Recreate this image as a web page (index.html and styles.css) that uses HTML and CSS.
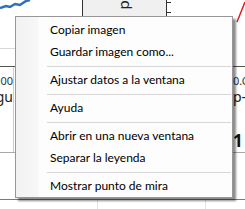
FILE: index.html
```html
<!DOCTYPE html>
<html lang="es">
<head>
    <meta charset="UTF-8">
    <title>Menú contextual</title>
    <link rel="stylesheet" href="styles.css">
</head>
<body>

<div class="app">
    <!-- Graficos -->
    <div class="charts">
        <div class="plot plot-left">
            <svg width="82" height="66" viewBox="0 0 82 66">
                <path d="M0 8 L6 6 L10 7 L15 4 L20 5 L26 1 L30 0" stroke="#2f6fb8" stroke-width="2.5" fill="none"/>
                <line x1="0" y1="48.5" x2="82" y2="48.5" stroke="#d8d8d8"/>
            </svg>
        </div>
        <div class="ylabel"><span>Latitud</span></div>
        <div class="plot plot-right">
            <svg width="78" height="66" viewBox="0 0 78 66">
                <path d="M0 2.5 H4 M0 12.5 H4 M0 22.5 H4 M0 32.5 H4 M0 42.5 H4" stroke="#333" stroke-width="1"/>
                <path d="M70 22 L78 2" stroke="#e02020" stroke-width="1.5" fill="none"/>
            </svg>
        </div>
    </div>

    <!-- Tabla -->
    <div class="table">
        <div class="cell cell-left">
            <div class="small">1.000</div>
            <div class="big">Pingu</div>
        </div>
        <div class="cell cell-mid"></div>
        <div class="cell cell-right">
            <div class="small">0.C</div>
            <div class="big">p-</div>
            <div class="num">1</div>
        </div>
    </div>

    <div class="footer">
        <div class="grid-line g1"></div>
        <div class="grid-line g2"></div>
    </div>

    <!-- Menu contextual -->
    <ul class="menu">
        <li>Copiar imagen</li>
        <li>Guardar imagen como...</li>
        <li class="sep"></li>
        <li>Ajustar datos a la ventana</li>
        <li class="sep"></li>
        <li>Ayuda</li>
        <li class="sep"></li>
        <li>Abrir en una nueva ventana</li>
        <li>Separar la leyenda</li>
        <li class="sep"></li>
        <li>Mostrar punto de mira</li>
    </ul>
</div>

</body>
</html>
```

FILE: styles.css
```css
body {
    margin: 0;
    font-family: "Noto Sans", Arial, sans-serif;
    background-color: white;
}
.app {
    position: relative;
    width: 245px;
    height: 209px;
    overflow: hidden;
    background-color: white;
}
.charts {
    display: flex;
    height: 66px;
}
.plot svg {
    display: block;
}
.plot-left {
    width: 82px;
    border-right: 1px solid #333;
}
.ylabel {
    width: 84px;
    background-color: #f0f0f0;
    display: flex;
    justify-content: center;
    overflow: hidden;
}
.ylabel span {
    writing-mode: vertical-rl;
    font-size: 15px;
    color: #222;
    margin-top: -40px;
    margin-left: 4px;
}
.plot-right {
    flex: 1;
    border-left: 1px solid #333;
}
.table {
    display: grid;
    grid-template-columns: 14px 1fr 13px;
    height: 85px;
    border-top: 1px solid #555;
    border-bottom: 1px solid #aaa;
}
.cell {
    overflow: hidden;
    white-space: nowrap;
}
.cell-left {
    direction: rtl;
    border-right: 1px solid #ccc;
}
.cell-right {
    padding-left: 1px;
}
.small {
    font-size: 11px;
    color: #333;
    margin-top: 6px;
    height: 14px;
}
.big {
    font-size: 14px;
    color: #222;
    height: 18px;
}
.num {
    font-size: 17px;
    font-weight: bold;
    color: #111;
    margin-top: 24px;
}
.footer {
    position: relative;
    height: 57px;
}
.footer::before {
    content: "";
    display: block;
    height: 46px;
    border-bottom: 1px solid #4a86c5;
}
.grid-line {
    position: absolute;
    top: 47px;
    bottom: 0;
    width: 1px;
    background-color: #e4e4e4;
}
.g1 { left: 97px; }
.g2 { left: 205px; }

.menu {
    position: absolute;
    left: 15px;
    top: 16px;
    width: 218px;
    box-sizing: border-box;
    margin: 0;
    padding: 2px 0 0;
    list-style: none;
    border: 1px solid #979797;
    background: linear-gradient(to right, #f2f2f2 0, #f7f7f7 22px, #fdfdfd 23px);
    box-shadow: 3px 3px 2px rgba(0, 0, 0, 0.45);
    font-family: Lato, "Noto Sans", sans-serif;
    font-size: 12px;
    color: #000;
}
.menu li {
    height: 22px;
    line-height: 22px;
    padding-left: 34px;
    white-space: nowrap;
}
.menu li.sep {
    height: 1px;
    padding: 0;
    margin: 3px 1px 2px 31px;
    background-color: #d7d7d7;
}
```
